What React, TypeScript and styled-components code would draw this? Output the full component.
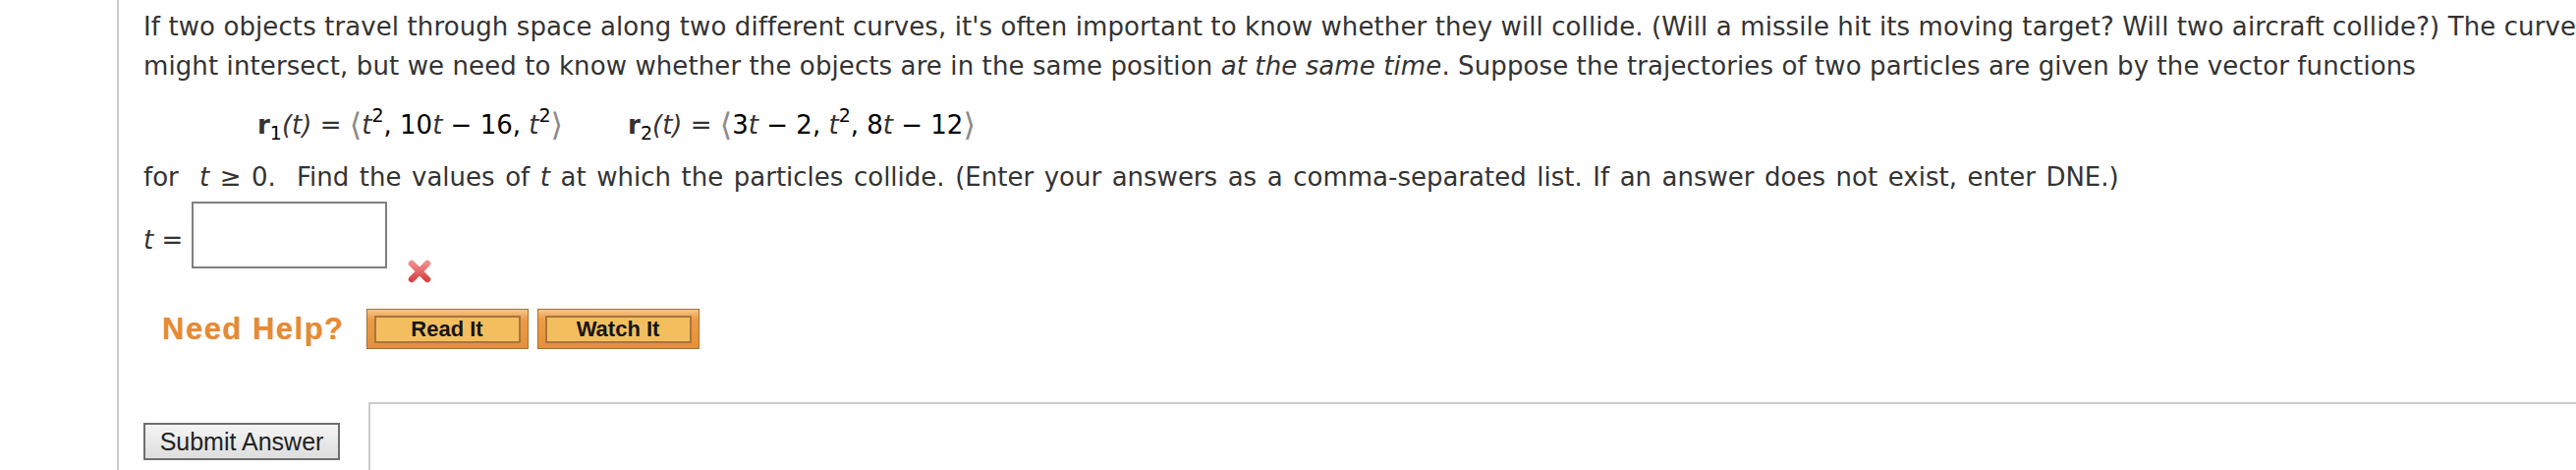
import React from "react";
import styled, { createGlobalStyle } from "styled-components";

const GlobalStyle = createGlobalStyle`
  html, body {
    margin: 0;
    padding: 0;
    background: #ffffff;
    overflow: hidden;
  }
  body {
    font-family: "DejaVu Sans", Verdana, sans-serif;
  }
`;

const Page = styled.div`
  display: flex;
  min-height: 478px;
  padding-left: 119px;
`;

const Main = styled.main`
  flex: 1;
  min-width: 0;
  border-left: 2px solid #cccccc;
  padding-left: 25px;
  font-size: 26px;
  line-height: 40px;
  color: #333333;
`;

const Question = styled.p`
  margin: 0;
  padding-top: 7px;
  letter-spacing: 0.1px;
  white-space: nowrap;
`;

const FormulaLine = styled.div`
  display: flex;
  gap: 66px;
  margin-top: 20px;
  padding-left: 116px;
  white-space: nowrap;
  color: #000000;
`;

const Expr = styled.span``;

const Vec = styled.b`
  font-weight: bold;
  color: #333333;
`;

const Var = styled.i`
  font-style: italic;
  color: #333333;
`;

const Sub = styled.sub`
  font-size: 19px;
  line-height: 0;
  vertical-align: -6px;
`;

const Sup = styled.sup`
  font-size: 19px;
  line-height: 0;
  vertical-align: 12px;
`;

const Angle = styled.span`
  font-size: 32px;
  color: #8a8a8a;
  line-height: 0;
  vertical-align: -2px;
`;

const Prompt = styled.p`
  margin: 13px 0 0;
  word-spacing: 2.3px;
  white-space: nowrap;
`;

const AnswerRow = styled.div`
  display: flex;
  align-items: flex-start;
  margin-top: 5px;
`;

const AnswerLabel = styled.span`
  margin-top: 19px;
  margin-right: 9px;
`;

const AnswerInput = styled.input`
  box-sizing: border-box;
  width: 199px;
  height: 68px;
  border: 2px solid #7f7f7f;
  background: #ffffff;
  outline: none;
  font: inherit;
`;

const WrongMark = styled.svg`
  margin-left: 20px;
  margin-top: 58px;
  flex-shrink: 0;
`;

const HelpRow = styled.div`
  display: flex;
  align-items: center;
  gap: 9px;
  margin-top: 25px;
`;

const HelpTitle = styled.span`
  margin-left: 19px;
  margin-right: 13px;
  font-family: "Liberation Sans", Arial, sans-serif;
  font-weight: bold;
  font-size: 31px;
  letter-spacing: 1.5px;
  line-height: normal;
  color: #e58a35;
  text-shadow: 0 0 1px rgba(229, 138, 53, 0.6);
`;

const HelpButton = styled.button`
  box-sizing: border-box;
  width: 165px;
  height: 41px;
  padding: 6px 7px 5px;
  border: 1px solid #a8702f;
  background: linear-gradient(#f6c68c 0%, #ec9c46 25%, #e5903a 100%);
  cursor: pointer;
`;

const HelpButtonFace = styled.span`
  box-sizing: border-box;
  display: flex;
  align-items: center;
  justify-content: center;
  height: 100%;
  border: 2px solid #a8753e;
  background: #f3bf5e;
  font-family: "Liberation Sans", Arial, sans-serif;
  font-weight: bold;
  font-size: 22px;
  color: #151515;
`;

const SubmitRow = styled.div`
  display: flex;
  align-items: flex-start;
  margin-top: 54px;
`;

const SubmitButton = styled.button`
  box-sizing: border-box;
  width: 200px;
  height: 38px;
  margin-top: 21px;
  padding: 0;
  border: 2px solid #6e6e6e;
  background: linear-gradient(#f5f5f5, #dddddd);
  font-family: "Liberation Sans", Arial, sans-serif;
  font-size: 25px;
  color: #222222;
`;

const FeedbackBox = styled.div`
  flex: 1;
  height: 120px;
  margin-left: 29px;
  border: 2px solid #cccccc;
  border-right: none;
`;

const helpLinks = ["Read It", "Watch It"];

const App = () => {
  return (
    <>
      <GlobalStyle />
      <Page>
        <Main>
          <Question>
            If two objects travel through space along two different curves, it's often important to know whether they
            will collide. (Will a missile hit its moving target? Will two aircraft collide?) The curves
            <br />
            might intersect, but we need to know whether the objects are in the same position <i>at the same time</i>.
            Suppose the trajectories of two particles are given by the vector functions
          </Question>

          <FormulaLine>
            <Expr>
              <Vec>r</Vec>
              <Sub>1</Sub>
              <Var>(t)</Var> <Var>=</Var> <Angle>⟨</Angle>
              <Var>t</Var>
              <Sup>2</Sup>, 10<Var>t</Var> − 16, <Var>t</Var>
              <Sup>2</Sup>
              <Angle>⟩</Angle>
            </Expr>
            <Expr>
              <Vec>r</Vec>
              <Sub>2</Sub>
              <Var>(t)</Var> <Var>=</Var> <Angle>⟨</Angle>3<Var>t</Var> − 2, <Var>t</Var>
              <Sup>2</Sup>, 8<Var>t</Var> − 12<Angle>⟩</Angle>
            </Expr>
          </FormulaLine>

          <Prompt>
            for&nbsp; <i>t</i> ≥ 0.&nbsp; Find the values of <i>t</i> at which the particles collide. (Enter your answers
            as a comma-separated list. If an answer does not exist, enter DNE.)
          </Prompt>

          <AnswerRow>
            <AnswerLabel>
              <i>t</i> =
            </AnswerLabel>
            <AnswerInput type="text" aria-label="t" />
            <WrongMark width="26" height="26" viewBox="0 0 26 26">
              <defs>
                <linearGradient id="xg" x1="0" y1="0" x2="0" y2="1">
                  <stop offset="0" stopColor="#f08a8a" />
                  <stop offset="1" stopColor="#d84545" />
                </linearGradient>
              </defs>
              <path d="M5 5 L21 21 M21 5 L5 21" stroke="url(#xg)" strokeWidth="6.5" strokeLinecap="round" />
            </WrongMark>
          </AnswerRow>

          <HelpRow>
            <HelpTitle>Need Help?</HelpTitle>
            {helpLinks.map((label) => (
              <HelpButton key={label} type="button">
                <HelpButtonFace>{label}</HelpButtonFace>
              </HelpButton>
            ))}
          </HelpRow>

          <SubmitRow>
            <SubmitButton type="button">Submit Answer</SubmitButton>
            <FeedbackBox />
          </SubmitRow>
        </Main>
      </Page>
    </>
  );
};

export default App;
